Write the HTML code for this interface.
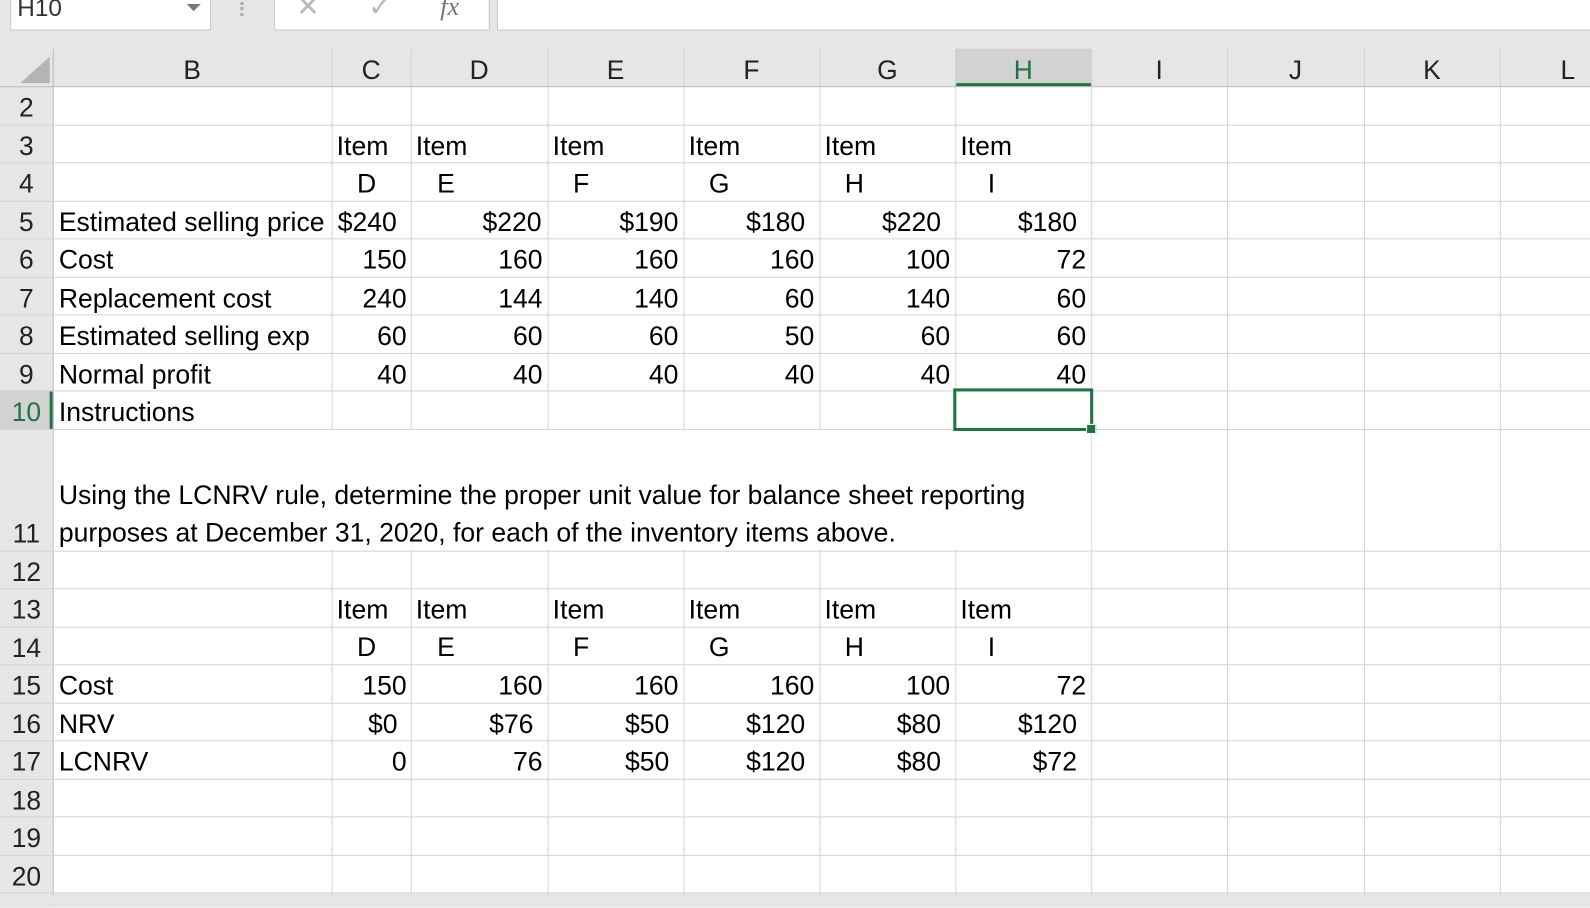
<!DOCTYPE html>
<html><head><meta charset="utf-8"><style>
body{margin:0;width:1590px;height:895px;overflow:hidden;background:#fff;font-family:"Liberation Sans",Calibri,sans-serif;position:relative}
#w{position:absolute;left:0;top:0;width:1590px;height:883px;transform:scale(1.0141);transform-origin:0 0}
.a{position:absolute}
.t{position:absolute;font-size:26.2px;color:#000;line-height:37px;white-space:nowrap;margin-top:2px}
.r{text-align:right}
.vl{position:absolute;top:48px;height:835px;width:1px;background:#d4d4d4}
.hl{position:absolute;left:0;width:1590px;height:1px;background:#d4d4d4}
.ch{position:absolute;top:48px;height:37px;line-height:42px;text-align:center;font-size:26px;color:#222}
.rh{position:absolute;left:0;width:52px;text-align:center;font-size:26px;color:#222;line-height:37px;margin-top:2px}
</style></head><body><div id="w">
<div class="a" style="left:0;top:0;width:1590px;height:48px;background:#e6e6e6"></div>
<div class="a" style="left:10px;top:-2px;width:196px;height:30px;background:#fff;border:1px solid #c6c6c6"></div>
<div class="t" style="left:17px;top:-12px;font-size:24px;color:#333">H10</div>
<div class="a" style="left:184px;top:4px;width:0;height:0;border-left:7px solid transparent;border-right:7px solid transparent;border-top:7px solid #777"></div>
<div class="a" style="left:237px;top:2px;width:4px;height:14px;border-left:3px dotted #aaa"></div>
<div class="a" style="left:270px;top:-2px;width:211px;height:30px;background:#fff;border:1px solid #c6c6c6"></div>
<div class="t" style="left:292px;top:-14px;font-size:28px;color:#bbb">✕</div>
<div class="t" style="left:363px;top:-14px;font-size:28px;color:#bbb">✓</div>
<div class="t" style="left:434px;top:-14px;font-size:26px;color:#777;font-family:'Liberation Serif',serif;font-style:italic">fx</div>
<div class="a" style="left:490px;top:-2px;width:1110px;height:30px;background:#fff;border:1px solid #c6c6c6"></div>
<div class="a" style="left:0;top:48px;width:1590px;height:37px;background:#e6e6e6"></div>
<div class="a" style="left:0;top:85px;width:52px;height:810px;background:#e6e6e6"></div>
<div class="a" style="left:0;top:880px;width:1590px;height:15px;background:#e6e6e6"></div>
<div class="a" style="left:20px;top:56px;width:0;height:0;border-left:29px solid transparent;border-bottom:26px solid #b4b4b4"></div>
<div class="a" style="left:942px;top:48px;width:134px;height:37px;background:#d2d2d2"></div>
<div class="a" style="left:942px;top:82px;width:134px;height:3px;background:#217346"></div>
<div class="a" style="left:0;top:385px;width:52px;height:38px;background:#d2d2d2"></div>
<div class="a" style="left:49px;top:385px;width:3px;height:38px;background:#217346"></div>
<div class="ch" style="left:52px;width:275px">B</div>
<div class="ch" style="left:327px;width:78px">C</div>
<div class="ch" style="left:405px;width:135px">D</div>
<div class="ch" style="left:540px;width:134px">E</div>
<div class="ch" style="left:674px;width:134px">F</div>
<div class="ch" style="left:808px;width:134px">G</div>
<div class="ch" style="left:942px;width:134px;color:#217346">H</div>
<div class="ch" style="left:1076px;width:134px">I</div>
<div class="ch" style="left:1210px;width:135px">J</div>
<div class="ch" style="left:1345px;width:134px">K</div>
<div class="ch" style="left:1479px;width:134px">L</div>
<div class="vl" style="left:52px;background:#bbb"></div>
<div class="vl" style="left:327px"></div><div class="vl" style="left:405px"></div><div class="vl" style="left:540px"></div><div class="vl" style="left:674px"></div><div class="vl" style="left:808px"></div><div class="vl" style="left:942px"></div><div class="vl" style="left:1076px"></div><div class="vl" style="left:1210px"></div><div class="vl" style="left:1345px"></div><div class="vl" style="left:1479px"></div>
<div class="hl" style="top:85px;background:#bbb"></div>
<div class="hl" style="top:123px"></div><div class="hl" style="top:160px"></div><div class="hl" style="top:198px"></div><div class="hl" style="top:235px"></div><div class="hl" style="top:273px"></div><div class="hl" style="top:310px"></div><div class="hl" style="top:348px"></div><div class="hl" style="top:385px"></div><div class="hl" style="top:423px"></div><div class="hl" style="top:543px"></div><div class="hl" style="top:580px"></div><div class="hl" style="top:618px"></div><div class="hl" style="top:655px"></div><div class="hl" style="top:693px"></div><div class="hl" style="top:730px"></div><div class="hl" style="top:768px"></div><div class="hl" style="top:805px"></div><div class="hl" style="top:843px"></div><div class="hl" style="top:880px"></div>
<div class="a" style="left:53px;top:424px;width:1023px;height:118px;background:#fff"></div>
<div class="rh" style="top:86px">2</div><div class="rh" style="top:124px">3</div><div class="rh" style="top:161px">4</div><div class="rh" style="top:199px">5</div><div class="rh" style="top:236px">6</div><div class="rh" style="top:274px">7</div><div class="rh" style="top:311px">8</div><div class="rh" style="top:349px">9</div><div class="rh" style="top:386px;color:#217346">10</div><div class="rh" style="top:506px">11</div><div class="rh" style="top:544px">12</div><div class="rh" style="top:581px">13</div><div class="rh" style="top:619px">14</div><div class="rh" style="top:656px">15</div><div class="rh" style="top:694px">16</div><div class="rh" style="top:731px">17</div><div class="rh" style="top:769px">18</div><div class="rh" style="top:806px">19</div><div class="rh" style="top:844px">20</div>
<div class="a" style="left:941px;top:384px;width:132px;height:36px;border:3px solid #217346;margin:-1px"></div>
<div class="a" style="left:1071px;top:418px;width:8px;height:8px;background:#217346;border:1px solid #fff"></div>
<div class="t" style="left:332px;top:124px">Item</div><div class="t" style="left:410px;top:124px">Item</div><div class="t" style="left:545px;top:124px">Item</div><div class="t" style="left:679px;top:124px">Item</div><div class="t" style="left:813px;top:124px">Item</div><div class="t" style="left:947px;top:124px">Item</div>
<div class="t" style="left:352px;top:161px">D</div><div class="t" style="left:431px;top:161px">E</div><div class="t" style="left:565px;top:161px">F</div><div class="t" style="left:699px;top:161px">G</div><div class="t" style="left:833px;top:161px">H</div><div class="t" style="left:974px;top:161px">I</div>
<div class="t" style="left:58px;top:199px">Estimated selling price</div>
<div class="t" style="left:58px;top:236px">Cost</div>
<div class="t" style="left:58px;top:274px">Replacement cost</div>
<div class="t" style="left:58px;top:311px">Estimated selling exp</div>
<div class="t" style="left:58px;top:349px">Normal profit</div>
<div class="t" style="left:58px;top:386px">Instructions</div>
<div class="t" style="left:58px;top:468px">Using the LCNRV rule, determine the proper unit value for balance sheet reporting</div>
<div class="t" style="left:58px;top:505px">purposes at December 31, 2020, for each of the inventory items above.</div>
<div class="t" style="left:333px;top:199px">$240</div>
<div class="t r" style="right:1056px;top:199px">$220</div><div class="t r" style="right:921px;top:199px">$190</div><div class="t r" style="right:796px;top:199px">$180</div><div class="t r" style="right:662px;top:199px">$220</div><div class="t r" style="right:528px;top:199px">$180</div>
<div class="t r" style="right:1189px;top:236px">150</div><div class="t r" style="right:1055px;top:236px">160</div><div class="t r" style="right:921px;top:236px">160</div><div class="t r" style="right:787px;top:236px">160</div><div class="t r" style="right:653px;top:236px">100</div><div class="t r" style="right:519px;top:236px">72</div>
<div class="t r" style="right:1189px;top:274px">240</div><div class="t r" style="right:1055px;top:274px">144</div><div class="t r" style="right:921px;top:274px">140</div><div class="t r" style="right:787px;top:274px">60</div><div class="t r" style="right:653px;top:274px">140</div><div class="t r" style="right:519px;top:274px">60</div>
<div class="t r" style="right:1189px;top:311px">60</div><div class="t r" style="right:1055px;top:311px">60</div><div class="t r" style="right:921px;top:311px">60</div><div class="t r" style="right:787px;top:311px">50</div><div class="t r" style="right:653px;top:311px">60</div><div class="t r" style="right:519px;top:311px">60</div>
<div class="t r" style="right:1189px;top:349px">40</div><div class="t r" style="right:1055px;top:349px">40</div><div class="t r" style="right:921px;top:349px">40</div><div class="t r" style="right:787px;top:349px">40</div><div class="t r" style="right:653px;top:349px">40</div><div class="t r" style="right:519px;top:349px">40</div>
<div class="t" style="left:332px;top:581px">Item</div><div class="t" style="left:410px;top:581px">Item</div><div class="t" style="left:545px;top:581px">Item</div><div class="t" style="left:679px;top:581px">Item</div><div class="t" style="left:813px;top:581px">Item</div><div class="t" style="left:947px;top:581px">Item</div>
<div class="t" style="left:352px;top:618px">D</div><div class="t" style="left:431px;top:618px">E</div><div class="t" style="left:565px;top:618px">F</div><div class="t" style="left:699px;top:618px">G</div><div class="t" style="left:833px;top:618px">H</div><div class="t" style="left:974px;top:618px">I</div>
<div class="t" style="left:58px;top:656px">Cost</div>
<div class="t" style="left:58px;top:694px">NRV</div>
<div class="t" style="left:58px;top:731px">LCNRV</div>
<div class="t r" style="right:1189px;top:656px">150</div><div class="t r" style="right:1055px;top:656px">160</div><div class="t r" style="right:921px;top:656px">160</div><div class="t r" style="right:787px;top:656px">160</div><div class="t r" style="right:653px;top:656px">100</div><div class="t r" style="right:519px;top:656px">72</div>
<div class="t r" style="right:1198px;top:694px">$0</div><div class="t r" style="right:1064px;top:694px">$76</div><div class="t r" style="right:930px;top:694px">$50</div><div class="t r" style="right:796px;top:694px">$120</div><div class="t r" style="right:662px;top:694px">$80</div><div class="t r" style="right:528px;top:694px">$120</div>
<div class="t r" style="right:1189px;top:731px">0</div><div class="t r" style="right:1055px;top:731px">76</div><div class="t r" style="right:930px;top:731px">$50</div><div class="t r" style="right:796px;top:731px">$120</div><div class="t r" style="right:662px;top:731px">$80</div><div class="t r" style="right:528px;top:731px">$72</div>
</div></body></html>
